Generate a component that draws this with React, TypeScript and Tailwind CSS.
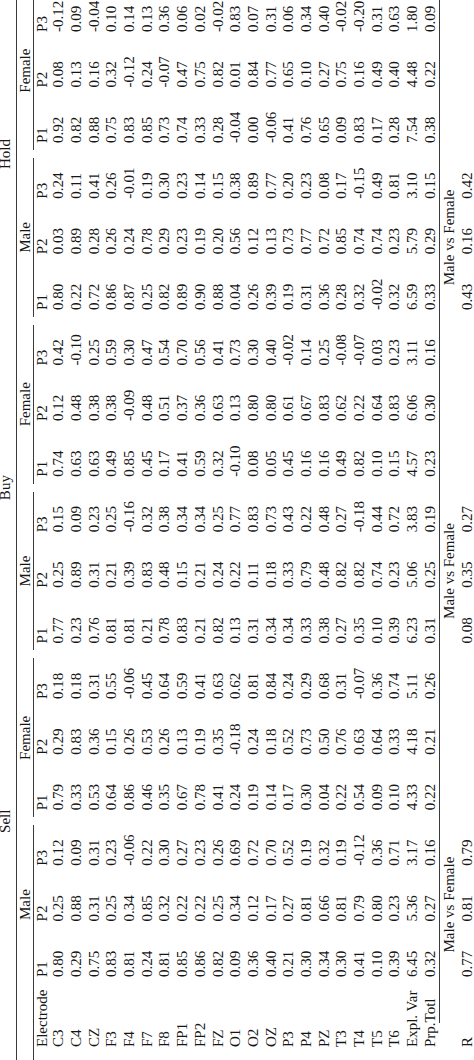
import React from 'react'

const electrodes = [
  'C3', 'C4', 'CZ', 'F3', 'F4', 'F7', 'F8', 'FP1', 'FP2', 'FZ', 'O1',
  'O2', 'OZ', 'P3', 'P4', 'PZ', 'T3', 'T4', 'T5', 'T6', 'Expl. Var', 'Prp.Totl',
]

// one string per column, top to bottom (Sell M, Sell F, Buy M, Buy F, Hold M, Hold F)
const columns: string[][] = [
  '0.80 0.29 0.75 0.83 0.81 0.24 0.81 0.85 0.86 0.82 0.09 0.36 0.40 0.21 0.30 0.34 0.30 0.41 0.10 0.39 6.45 0.32',
  '0.25 0.88 0.31 0.25 0.34 0.85 0.32 0.22 0.22 0.25 0.34 0.12 0.17 0.27 0.81 0.66 0.81 0.79 0.80 0.23 5.36 0.27',
  '0.12 0.09 0.31 0.23 -0.06 0.22 0.30 0.27 0.23 0.26 0.69 0.72 0.70 0.52 0.19 0.32 0.19 -0.12 0.36 0.71 3.17 0.16',
  '0.79 0.33 0.53 0.64 0.86 0.46 0.35 0.67 0.78 0.41 0.24 0.19 0.14 0.17 0.30 0.04 0.22 0.54 0.09 0.10 4.33 0.22',
  '0.29 0.83 0.36 0.15 0.26 0.53 0.26 0.13 0.19 0.35 -0.18 0.24 0.18 0.52 0.73 0.50 0.76 0.63 0.64 0.33 4.18 0.21',
  '0.18 0.18 0.31 0.55 -0.06 0.45 0.64 0.59 0.41 0.63 0.62 0.81 0.84 0.24 0.29 0.68 0.31 -0.07 0.36 0.74 5.11 0.26',
  '0.77 0.23 0.76 0.81 0.81 0.21 0.78 0.83 0.21 0.82 0.13 0.31 0.34 0.34 0.33 0.38 0.27 0.35 0.10 0.39 6.23 0.31',
  '0.25 0.89 0.31 0.21 0.39 0.83 0.48 0.15 0.21 0.24 0.22 0.11 0.18 0.33 0.79 0.48 0.82 0.82 0.74 0.23 5.06 0.25',
  '0.15 0.09 0.23 0.25 -0.16 0.32 0.38 0.34 0.34 0.25 0.77 0.83 0.73 0.43 0.22 0.48 0.27 -0.18 0.44 0.72 3.83 0.19',
  '0.74 0.63 0.63 0.49 0.85 0.45 0.17 0.41 0.59 0.32 -0.10 0.08 0.05 0.45 0.16 0.16 0.49 0.82 0.10 0.15 4.57 0.23',
  '0.12 0.48 0.38 0.38 -0.09 0.48 0.51 0.37 0.36 0.63 0.13 0.80 0.80 0.61 0.67 0.83 0.62 0.22 0.64 0.83 6.06 0.30',
  '0.42 -0.10 0.25 0.59 0.30 0.47 0.54 0.70 0.56 0.41 0.73 0.30 0.40 -0.02 0.14 0.25 -0.08 -0.07 0.03 0.23 3.11 0.16',
  '0.80 0.22 0.72 0.86 0.87 0.25 0.82 0.89 0.90 0.88 0.04 0.26 0.39 0.19 0.31 0.36 0.28 0.32 -0.02 0.32 6.59 0.33',
  '0.03 0.89 0.28 0.26 0.24 0.78 0.29 0.23 0.19 0.20 0.56 0.12 0.13 0.73 0.77 0.72 0.85 0.74 0.74 0.23 5.79 0.29',
  '0.24 0.11 0.41 0.26 -0.01 0.19 0.30 0.23 0.14 0.15 0.38 0.89 0.77 0.20 0.23 0.08 0.17 -0.15 0.49 0.81 3.10 0.15',
  '0.92 0.82 0.88 0.75 0.83 0.85 0.73 0.74 0.33 0.28 -0.04 0.00 -0.06 0.41 0.76 0.65 0.09 0.83 0.17 0.28 7.54 0.38',
  '0.08 0.13 0.16 0.32 -0.12 0.24 -0.07 0.47 0.75 0.82 0.01 0.84 0.77 0.65 0.10 0.27 0.75 0.16 0.49 0.40 4.48 0.22',
  '-0.12 0.09 -0.04 0.10 0.14 0.13 0.36 0.06 0.02 -0.02 0.83 0.07 0.31 0.06 0.34 0.40 -0.02 -0.20 0.31 0.63 1.80 0.09',
].map((s) => s.split(' '))

const groups = ['Sell', 'Buy', 'Hold']
const sexes = ['Male', 'Female']
const rValues = [
  ['0.77', '0.81', '0.79'],
  ['0.08', '0.35', '0.27'],
  ['0.43', '0.16', '0.42'],
]

function Cell({ children }: { children?: React.ReactNode }) {
  return <div className="w-[55.6px] shrink-0 whitespace-nowrap pl-[11px]">{children}</div>
}

export default function App() {
  return (
    <div className="h-[1060px] w-[474px] overflow-hidden bg-white">
      {/* the table is laid out normally, then turned a quarter to the left */}
      <div className="flex h-[474px] w-[1060px] origin-top-left -rotate-90 translate-y-[1060px] flex-col font-['Liberation_Serif',serif] text-[15px] leading-none text-[#161616]">
        <div className="-mt-[6px] flex h-[22px] shrink-0 items-center">
          <div className="w-[72px] shrink-0" />
          {groups.map((g) => (
            <div key={g} className="w-[333.6px] shrink-0 text-center">
              {g}
            </div>
          ))}
        </div>
        <div className="h-px shrink-0 bg-[#3a3a3a]" />

        <div className="flex h-[16px] shrink-0 items-center">
          <div className="w-[72px] shrink-0" />
          {groups.map((g) =>
            sexes.map((s) => (
              <div key={g + s} className="w-[166.8px] shrink-0 text-center">
                {s}
              </div>
            )),
          )}
        </div>
        <div className="flex h-px shrink-0">
          <div className="w-[234.8px] shrink-0 bg-[#3a3a3a]" />
          <div className="w-[4px] shrink-0" />
          {[0, 1, 2, 3, 4].map((i) => (
            <div key={i} className="w-[166.8px] shrink-0 px-[4px]">
              <div className="h-px bg-[#3a3a3a]" />
            </div>
          ))}
        </div>

        <div className="flex h-[16px] shrink-0 items-center">
          <div className="w-[72px] shrink-0 pl-[13px]">Electrode</div>
          {columns.map((_, i) => (
            <Cell key={i}>P{(i % 3) + 1}</Cell>
          ))}
        </div>

        {electrodes.map((e, r) => (
          <div key={e} className="flex h-[17.7px] shrink-0 items-center">
            <div className="w-[72px] shrink-0 whitespace-nowrap pl-[13px]">{e}</div>
            {columns.map((col, i) => (
              <Cell key={i}>{col[r]}</Cell>
            ))}
          </div>
        ))}

        <div className="ml-[37px] h-px shrink-0 bg-[#3a3a3a]" />

        <div className="flex h-[18px] shrink-0 items-center">
          <div className="w-[72px] shrink-0" />
          {groups.map((g) => (
            <React.Fragment key={g}>
              <div className="w-[166.8px] shrink-0 text-center">Male vs Female</div>
              <div className="w-[166.8px] shrink-0" />
            </React.Fragment>
          ))}
        </div>

        <div className="flex h-[18px] shrink-0 items-center">
          <div className="w-[72px] shrink-0 pl-[13px]">R</div>
          {rValues.map((vals, g) => (
            <React.Fragment key={g}>
              {vals.map((v, i) => (
                <Cell key={i}>{v}</Cell>
              ))}
              <Cell />
              <Cell />
              <Cell />
            </React.Fragment>
          ))}
        </div>
      </div>
    </div>
  )
}
